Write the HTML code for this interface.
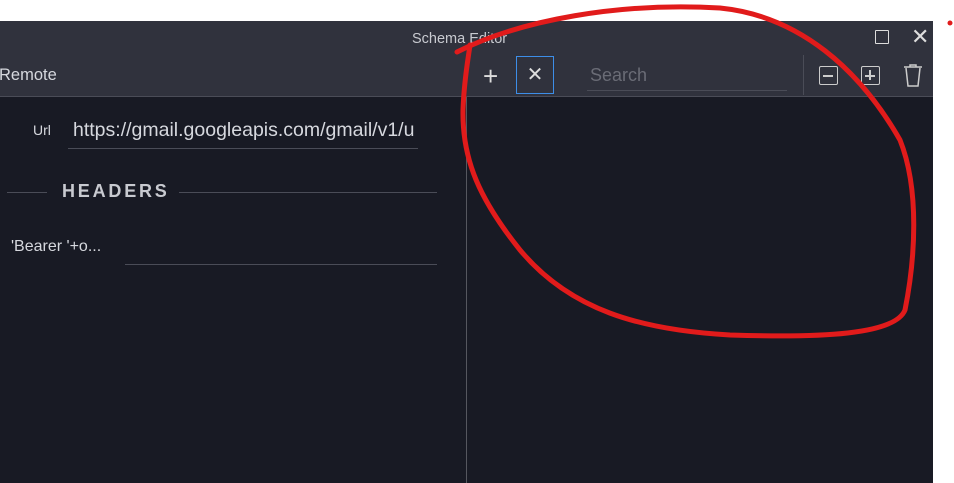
<!DOCTYPE html>
<html><head><style>
body{margin:0;width:954px;height:483px;background:#fff;position:relative;overflow:hidden;font-family:"Liberation Sans",sans-serif}
.win{position:absolute;left:0;top:21px;width:933px;height:462px;background:#181a24}
.hdr{position:absolute;left:0;top:0;width:933px;height:75px;background:#30323d;border-bottom:1px solid #4a4c57}
.t{position:absolute;color:#d6d8de;white-space:nowrap}
</style></head><body>
<div class="win">
<div class="hdr"></div>
<div class="t" style="left:412px;top:10px;font-size:14.5px;color:#c8cad0">Schema Editor</div>
<div style="position:absolute;left:875px;top:9px;width:12px;height:12px;border:1.5px solid #ddd;border-radius:1px"></div>
<div class="t" style="left:911px;top:3px;font-size:22px;color:#ddd">✕</div>
<div class="t" style="left:-1px;top:45px;font-size:16.5px">Remote</div>
<div class="t" style="left:483px;top:40px;font-size:26px;color:#ddd;font-weight:300">+</div>
<div style="position:absolute;left:516px;top:35px;width:36px;height:36px;border:1px solid #3d8ee8;color:#ddd;font-size:20px;text-align:center;line-height:36px">✕</div>
<div class="t" style="left:590px;top:44px;font-size:18px;color:#6a6c76">Search</div>
<div style="position:absolute;left:587px;top:69px;width:200px;height:1px;background:#4a4c57"></div>
<div style="position:absolute;left:803px;top:34px;width:1px;height:40px;background:#4a4c57"></div>
<div style="position:absolute;left:819px;top:45px;width:17px;height:17px;border:1.5px solid #ccc;border-radius:2px"></div>
<div style="position:absolute;left:823px;top:54px;width:10px;height:1.5px;background:#ccc"></div>
<div style="position:absolute;left:861px;top:45px;width:17px;height:17px;border:1.5px solid #ccc;border-radius:2px"></div>
<div style="position:absolute;left:865px;top:54px;width:10px;height:1.5px;background:#ccc"></div>
<div style="position:absolute;left:869px;top:49px;width:1.5px;height:10px;background:#ccc"></div>
<svg style="position:absolute;left:900px;top:42px" width="26" height="26"><path d="M4 4h18M10 4V2h6v2M6 5l2 18h10l2-18" fill="none" stroke="#ccc" stroke-width="1.5"/></svg>
<div style="position:absolute;left:466px;top:76px;width:1px;height:386px;background:#55575f"></div>
<div class="t" style="left:33px;top:101px;font-size:14px">Url</div>
<div class="t" style="left:73px;top:98px;font-size:19.5px">https://gmail.googleapis.com/gmail/v1/u</div>
<div style="position:absolute;left:68px;top:127px;width:350px;height:1px;background:#4a4c57"></div>
<div style="position:absolute;left:7px;top:171px;width:40px;height:1px;background:#4a4c57"></div>
<div class="t" style="left:62px;top:160px;font-size:18px;letter-spacing:2.8px;font-weight:bold;color:#c8cad0">HEADERS</div>
<div style="position:absolute;left:179px;top:171px;width:258px;height:1px;background:#4a4c57"></div>
<div class="t" style="left:11px;top:217px;font-size:16px">'Bearer '+o...</div>
<div style="position:absolute;left:125px;top:243px;width:312px;height:1px;background:#4a4c57"></div>
</div>
<svg style="position:absolute;left:0;top:0" width="954" height="483"><path d="M457 52 C520 20 620 2 720 8 C800 16 860 70 900 140 C920 190 915 260 905 310 C895 335 820 338 730 335 C640 330 570 310 520 250 C480 200 462 160 463 110 C464 80 468 60 470 45" fill="none" stroke="#e11b1b" stroke-width="5" stroke-linecap="round"/><circle cx="950" cy="23" r="2.5" fill="#e11b1b"/></svg>
</body></html>
